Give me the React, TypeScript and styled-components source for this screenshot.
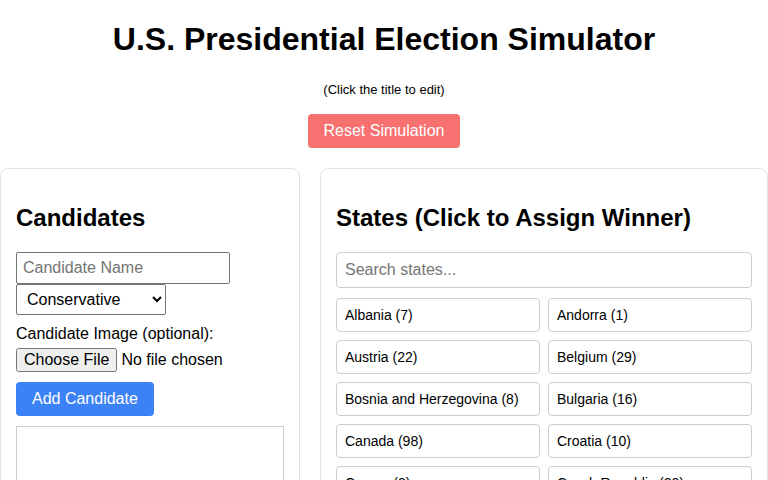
import React, { useState } from 'react'
import styled, { createGlobalStyle } from 'styled-components'

const GlobalStyle = createGlobalStyle`
  body {
    margin: 0;
    font-family: 'Liberation Sans', Arial, sans-serif;
    background: #fff;
    color: #000;
  }
`

const Page = styled.div`
  display: flex;
  flex-direction: column;
  align-items: center;
`

const Title = styled.h1`
  font-size: 32px;
  font-weight: bold;
  margin: 21px 0 0;
  line-height: 37px;
  cursor: pointer;
`

const Hint = styled.p`
  font-size: 13px;
  margin: 24px 0 0;
  line-height: 15px;
`

const ResetButton = styled.button`
  margin-top: 17px;
  height: 34px;
  padding: 0 16px;
  border: none;
  border-radius: 4px;
  background: #f87171;
  color: #fff;
  font-family: inherit;
  font-size: 16px;
  cursor: pointer;
`

const Columns = styled.div`
  align-self: stretch;
  display: flex;
  gap: 20px;
  margin-top: 20px;
`

const Panel = styled.section<{ $width?: number }>`
  ${({ $width }) => ($width ? `width: ${$width}px; flex: none;` : 'flex: 1;')}
  box-sizing: border-box;
  border: 1px solid #e2e2e2;
  border-radius: 8px;
  padding: 15px;
  background: #fff;
  min-height: 400px;
`

const Heading = styled.h2`
  font-size: 24px;
  font-weight: bold;
  margin: 20px 0 20px;
  line-height: 28px;
`

const TextInput = styled.input`
  display: block;
  box-sizing: border-box;
  width: 214px;
  height: 32px;
  padding: 0 6px;
  border: 1px solid #767676;
  border-radius: 2px;
  font-family: inherit;
  font-size: 16px;
  &::placeholder {
    color: #757575;
  }
`

const Select = styled.select`
  display: block;
  box-sizing: border-box;
  width: 150px;
  height: 31px;
  padding: 0 6px;
  border: 1px solid #767676;
  border-radius: 2px;
  background: #fff;
  font-family: inherit;
  font-size: 16px;
  color: #000;
`

const Label = styled.label`
  display: block;
  margin-top: 9px;
  font-size: 16px;
  line-height: 20px;
`

const FileInput = styled.input`
  display: block;
  margin-top: 4px;
  font-family: inherit;
  font-size: 16px;
`

const AddButton = styled.button`
  display: block;
  margin-top: 10px;
  height: 34px;
  padding: 0 16px;
  border: none;
  border-radius: 4px;
  background: #3b82f6;
  color: #fff;
  font-family: inherit;
  font-size: 16px;
  cursor: pointer;
`

const CandidateList = styled.div`
  margin-top: 10px;
  border: 1px solid #ccc;
  min-height: 200px;
`

const Search = styled.input`
  display: block;
  box-sizing: border-box;
  width: 100%;
  height: 36px;
  padding: 0 8px;
  border: 1px solid #ccc;
  border-radius: 4px;
  font-family: inherit;
  font-size: 16px;
  &::placeholder {
    color: #757575;
  }
`

const StateGrid = styled.div`
  display: grid;
  grid-template-columns: 1fr 1fr;
  gap: 8px;
  margin-top: 10px;
`

const StateButton = styled.button`
  box-sizing: border-box;
  height: 34px;
  padding: 0 8px;
  text-align: left;
  border: 1px solid #ccc;
  border-radius: 4px;
  background: #fff;
  color: #000;
  font-family: inherit;
  font-size: 14px;
  cursor: pointer;
`

const states: [string, number][] = [
  ['Albania', 7],
  ['Andorra', 1],
  ['Austria', 22],
  ['Belgium', 29],
  ['Bosnia and Herzegovina', 8],
  ['Bulgaria', 16],
  ['Canada', 98],
  ['Croatia', 10],
  ['Cyprus', 3],
  ['Czech Republic', 20],
  ['Denmark', 15],
  ['Estonia', 4],
]

export default function App() {
  const [query, setQuery] = useState('')
  const shown = states.filter(([name]) => name.toLowerCase().includes(query.toLowerCase()))

  return (
    <Page>
      <GlobalStyle />
      <Title>U.S. Presidential Election Simulator</Title>
      <Hint>(Click the title to edit)</Hint>
      <ResetButton>Reset Simulation</ResetButton>
      <Columns>
        <Panel $width={300}>
          <Heading>Candidates</Heading>
          <TextInput placeholder="Candidate Name" />
          <Select defaultValue="Conservative">
            <option>Conservative</option>
            <option>Liberal</option>
            <option>Independent</option>
          </Select>
          <Label>Candidate Image (optional):</Label>
          <FileInput type="file" />
          <AddButton>Add Candidate</AddButton>
          <CandidateList />
        </Panel>
        <Panel>
          <Heading>States (Click to Assign Winner)</Heading>
          <Search placeholder="Search states..." value={query} onChange={e => setQuery(e.target.value)} />
          <StateGrid>
            {shown.map(([name, votes]) => (
              <StateButton key={name}>
                {name} ({votes})
              </StateButton>
            ))}
          </StateGrid>
        </Panel>
      </Columns>
    </Page>
  )
}
